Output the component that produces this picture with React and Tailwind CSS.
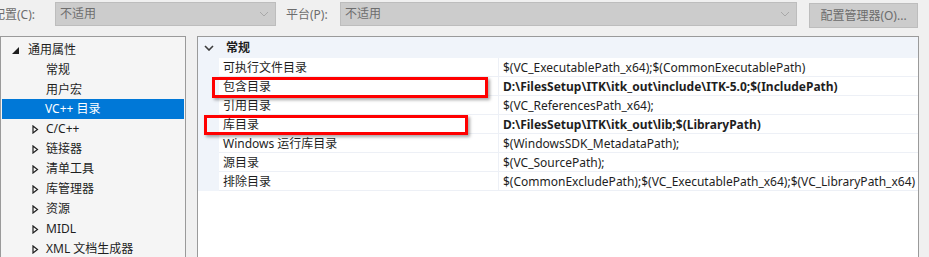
import React from 'react';

const FONT = { fontFamily: '"Noto Sans", "Noto Sans CJK SC", sans-serif' };

const TREE = [
  { label: 'VC++ 目录', selected: true },
  { label: 'C/C++', arrow: true },
  { label: '链接器', arrow: true },
  { label: '清单工具', arrow: true },
  { label: '库管理器', arrow: true },
  { label: '资源', arrow: true },
  { label: 'MIDL', arrow: true },
  { label: 'XML 文档生成器', arrow: true },
];

const PROPS = [
  { name: '可执行文件目录', value: '$(VC_ExecutablePath_x64);$(CommonExecutablePath)' },
  { name: '包含目录', value: 'D:\\FilesSetup\\ITK\\itk_out\\include\\ITK-5.0;$(IncludePath)', bold: true },
  { name: '引用目录', value: '$(VC_ReferencesPath_x64);' },
  { name: '库目录', value: 'D:\\FilesSetup\\ITK\\itk_out\\lib;$(LibraryPath)', bold: true },
  { name: 'Windows 运行库目录', value: '$(WindowsSDK_MetadataPath);' },
  { name: '源目录', value: '$(VC_SourcePath);' },
  { name: '排除目录', value: '$(CommonExcludePath);$(VC_ExecutablePath_x64);$(VC_LibraryPath_x64)' },
];

function Combo({ className }) {
  return (
    <div className={`h-[24px] flex items-center justify-between bg-[#cccccc] border border-[#bdbdbd] pl-[4px] pr-[6px] text-[#6d6d6d] ${className}`}>
      <span>不适用</span>
      <svg width="10" height="6" viewBox="0 0 10 6" fill="none" stroke="#a8a8a8" strokeWidth="1">
        <path d="M1 1l4 4 4-4" />
      </svg>
    </div>
  );
}

function HollowArrow() {
  return (
    <svg width="7" height="9" viewBox="0 0 7 9" fill="none" stroke="#1e1e1e" strokeWidth="1.2">
      <path d="M1 1l4.5 3.5L1 8z" />
    </svg>
  );
}

export default function App() {
  return (
    <div className="w-[929px] h-[257px] overflow-hidden bg-[#f0f0f0] text-[12px] leading-[16px] text-[#1e1e1e]" style={FONT}>
      {/* 顶部 */}
      <div className="h-[36px] flex items-start pt-[2px]">
        <span className="ml-[-7px] mt-[5px] w-[62px] text-[#6d6d6d]">配置(C):</span>
        <Combo className="w-[221px]" />
        <span className="ml-[10px] mt-[5px] w-[54px] text-[#6d6d6d]">平台(P):</span>
        <Combo className="w-[457px]" />
        <div className="ml-[12px] mt-[1px] h-[25px] w-[109px] flex items-center justify-center bg-[#cccccc] border border-[#bdbdbd] text-[#6d6d6d]">
          配置管理器(O)...
        </div>
      </div>

      <div className="flex h-[221px]">
        {/* 左侧树 */}
        <div className="w-[186px] shrink-0 border border-b-0 border-[#9a9a9a] bg-[#f5f5f5] pt-[3px] pl-[1px] pr-[1px]">
          <div className="h-[20px] flex items-center">
            <svg className="ml-[10px] mr-[9px]" width="7" height="7" viewBox="0 0 7 7">
              <path d="M7 0v7H0z" fill="#1e1e1e" />
            </svg>
            <span>通用属性</span>
          </div>
          <div className="h-[20px] flex items-center pl-[44px]">常规</div>
          <div className="h-[19px] flex items-center pl-[44px]">用户宏</div>
          {TREE.map((t) => (
            <div
              key={t.label}
              className={`h-[20px] flex items-center ${t.selected ? 'bg-[#0078d7] text-white pl-[43px]' : 'pl-[30px]'}`}
            >
              {t.arrow && (
                <span className="w-[14px] flex items-center">
                  <HollowArrow />
                </span>
              )}
              <span>{t.label}</span>
            </div>
          ))}
        </div>

        {/* 右侧属性网格 */}
        <div className="relative ml-[11px] w-[722px] shrink-0 border border-b-0 border-[#9a9a9a] bg-white">
          <div className="h-[21px] flex items-center bg-[#f0f4fa] pt-[1px]">
            <svg className="ml-[6px] mr-[12px]" width="10" height="6" viewBox="0 0 10 6" fill="none" stroke="#3c3c3c" strokeWidth="1.6">
              <path d="M1 1l4 4 4-4" />
            </svg>
            <span className="font-bold">常规</span>
          </div>
          {PROPS.map((p) => (
            <div key={p.name} className="h-[19px] flex">
              <div className="w-[21px] shrink-0 bg-[#f0f4fa]" />
              <div className="w-[280px] shrink-0 pl-[4px] pt-[1px] flex items-center border-b border-r border-[#edf0f6]">{p.name}</div>
              <div className={`flex-1 pl-[4px] pt-[1px] flex items-center whitespace-nowrap overflow-hidden border-b border-[#edf0f6] ${p.bold ? 'font-bold' : ''}`}>
                {p.value}
              </div>
            </div>
          ))}

          {/* 红框标注 */}
          <div className="absolute left-[14px] top-[40px] w-[276px] h-[21px] border-[3px] border-[#ff0000] shadow-[2px_2px_3px_rgba(0,0,0,0.35)]" />
          <div className="absolute left-[6px] top-[78px] w-[264px] h-[20px] border-[3px] border-[#ff0000] shadow-[2px_2px_3px_rgba(0,0,0,0.35)]" />
        </div>
      </div>
    </div>
  );
}
